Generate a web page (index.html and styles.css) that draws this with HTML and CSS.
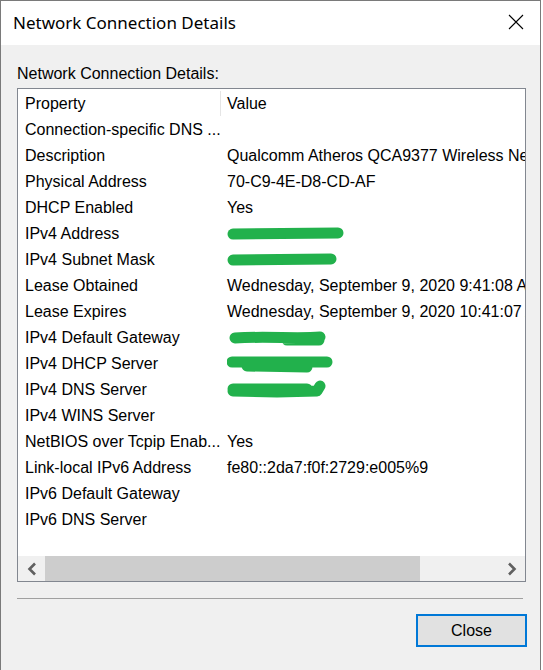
FILE: index.html
```html
<!DOCTYPE html>
<html lang="en">
<head>
    <meta charset="UTF-8">
    <title>Network Connection Details</title>
    <link rel="stylesheet" href="styles.css">
</head>
<body>

    <div class="window">
        <div class="titlebar">
            <span class="title">Network Connection Details</span>
            <svg class="close-x" width="16" height="16" viewBox="0 0 16 16">
                <path d="M1 1 L15 15 M15 1 L1 15" stroke="#000" stroke-width="1.1" fill="none"/>
            </svg>
        </div>

        <div class="content">
            <div class="label">Network Connection Details:</div>

            <div class="listbox">
                <div class="list">
                    <div class="row header">
                        <div class="cell prop">Property</div>
                        <div class="cell">Value</div>
                    </div>
                    <div class="row"><div class="cell prop">Connection-specific DNS ...</div><div class="cell"></div></div>
                    <div class="row"><div class="cell prop">Description</div><div class="cell">Qualcomm Atheros QCA9377 Wireless Network Adapter</div></div>
                    <div class="row"><div class="cell prop">Physical Address</div><div class="cell">70-C9-4E-D8-CD-AF</div></div>
                    <div class="row"><div class="cell prop">DHCP Enabled</div><div class="cell">Yes</div></div>
                    <div class="row"><div class="cell prop">IPv4 Address</div><div class="cell">
                        <svg class="scribble" width="130" height="20" viewBox="0 0 130 20"><path d="M6 10 L111 9"/></svg>
                    </div></div>
                    <div class="row"><div class="cell prop">IPv4 Subnet Mask</div><div class="cell">
                        <svg class="scribble" width="130" height="20" viewBox="0 0 130 20"><path d="M6 10 L104 9"/></svg>
                    </div></div>
                    <div class="row"><div class="cell prop">Lease Obtained</div><div class="cell">Wednesday, September 9, 2020 9:41:08 AM</div></div>
                    <div class="row"><div class="cell prop">Lease Expires</div><div class="cell">Wednesday, September 9, 2020 10:41:07 AM</div></div>
                    <div class="row"><div class="cell prop">IPv4 Default Gateway</div><div class="cell">
                        <svg class="scribble" width="130" height="20" viewBox="0 0 130 20"><path d="M8 10 C40 8 70 11 93 9 M60 12 L92 12"/></svg>
                    </div></div>
                    <div class="row"><div class="cell prop">IPv4 DHCP Server</div><div class="cell">
                        <svg class="scribble" width="130" height="20" viewBox="0 0 130 20"><path d="M5 8 L100 8 M20 12 L80 13"/></svg>
                    </div></div>
                    <div class="row"><div class="cell prop">IPv4 DNS Server</div><div class="cell">
                        <svg class="scribble" width="130" height="20" viewBox="0 0 130 20"><path d="M6 11 L50 12 L90 11 L93 6 M6 9 L80 9"/></svg>
                    </div></div>
                    <div class="row"><div class="cell prop">IPv4 WINS Server</div><div class="cell"></div></div>
                    <div class="row"><div class="cell prop">NetBIOS over Tcpip Enab...</div><div class="cell">Yes</div></div>
                    <div class="row"><div class="cell prop">Link-local IPv6 Address</div><div class="cell">fe80::2da7:f0f:2729:e005%9</div></div>
                    <div class="row"><div class="cell prop">IPv6 Default Gateway</div><div class="cell"></div></div>
                    <div class="row"><div class="cell prop">IPv6 DNS Server</div><div class="cell"></div></div>
                </div>

                <div class="hscroll">
                    <div class="arrow">
                        <svg width="10" height="14" viewBox="0 0 10 14"><path d="M8 1.5 L2.5 7 L8 12.5" stroke="#606060" stroke-width="2.6" fill="none"/></svg>
                    </div>
                    <div class="track"><div class="thumb"></div></div>
                    <div class="arrow">
                        <svg width="10" height="14" viewBox="0 0 10 14"><path d="M2 1.5 L7.5 7 L2 12.5" stroke="#606060" stroke-width="2.6" fill="none"/></svg>
                    </div>
                </div>
            </div>

            <div class="separator"></div>

            <div class="footer">
                <button class="close-btn">Close</button>
            </div>
        </div>
    </div>

</body>
</html>
```

FILE: styles.css
```css
body {
    margin: 0;
    background: #fff;
    font-family: "Liberation Sans", Arial, sans-serif;
    color: #000;
}
.window {
    width: 539px;
    height: 700px;
    border: 1px solid #7a7a7a;
    border-bottom: none;
    background: #f0f0f0;
}
.titlebar {
    height: 44px;
    background: #fff;
    display: flex;
    align-items: center;
    justify-content: space-between;
    padding: 0 16px 0 12px;
}
.title {
    font-family: "Noto Sans", sans-serif;
    font-size: 17px;
    margin-top: -2px;
}
.close-x {
    margin-top: -2px;
}
.content {
    padding: 20px 0 0 16px;
}
.label {
    font-size: 16px;
    line-height: 18px;
    margin-bottom: 5px;
}
.listbox {
    width: 507px;
    height: 492px;
    border: 1px solid #828790;
    background: #fff;
    display: flex;
    flex-direction: column;
}
.list {
    flex: 1;
    overflow: hidden;
    padding-top: 2px;
}
.row {
    display: grid;
    grid-template-columns: 203px 1fr;
    height: 26px;
    align-items: center;
    font-size: 16px;
}
.cell {
    white-space: nowrap;
    overflow: hidden;
    padding-left: 6px;
    height: 26px;
    line-height: 26px;
    display: flex;
    align-items: center;
}
.cell.prop {
    padding-left: 7px;
}
.header .prop {
    border-right: 1px solid #e5e5e5;
    height: 25px;
    margin-top: -1px;
}
.scribble path {
    stroke: #22b14c;
    stroke-width: 11;
    stroke-linecap: round;
    stroke-linejoin: round;
    fill: none;
}
.hscroll {
    height: 25px;
    display: flex;
    background: #f0f0f0;
}
.arrow {
    width: 27px;
    display: flex;
    align-items: center;
    justify-content: center;
}
.track {
    flex: 1;
}
.thumb {
    width: 375px;
    height: 100%;
    background: #cdcdcd;
}
.separator {
    width: 506px;
    height: 1px;
    background: #a0a0a0;
    margin-top: 16px;
}
.footer {
    display: flex;
    justify-content: flex-end;
    padding: 15px 13px 0 0;
}
.close-btn {
    width: 111px;
    height: 33px;
    border: 2px solid #0078d7;
    background: #e1e1e1;
    font-family: "Liberation Sans", Arial, sans-serif;
    font-size: 16px;
    color: #000;
    padding: 0;
}
```
